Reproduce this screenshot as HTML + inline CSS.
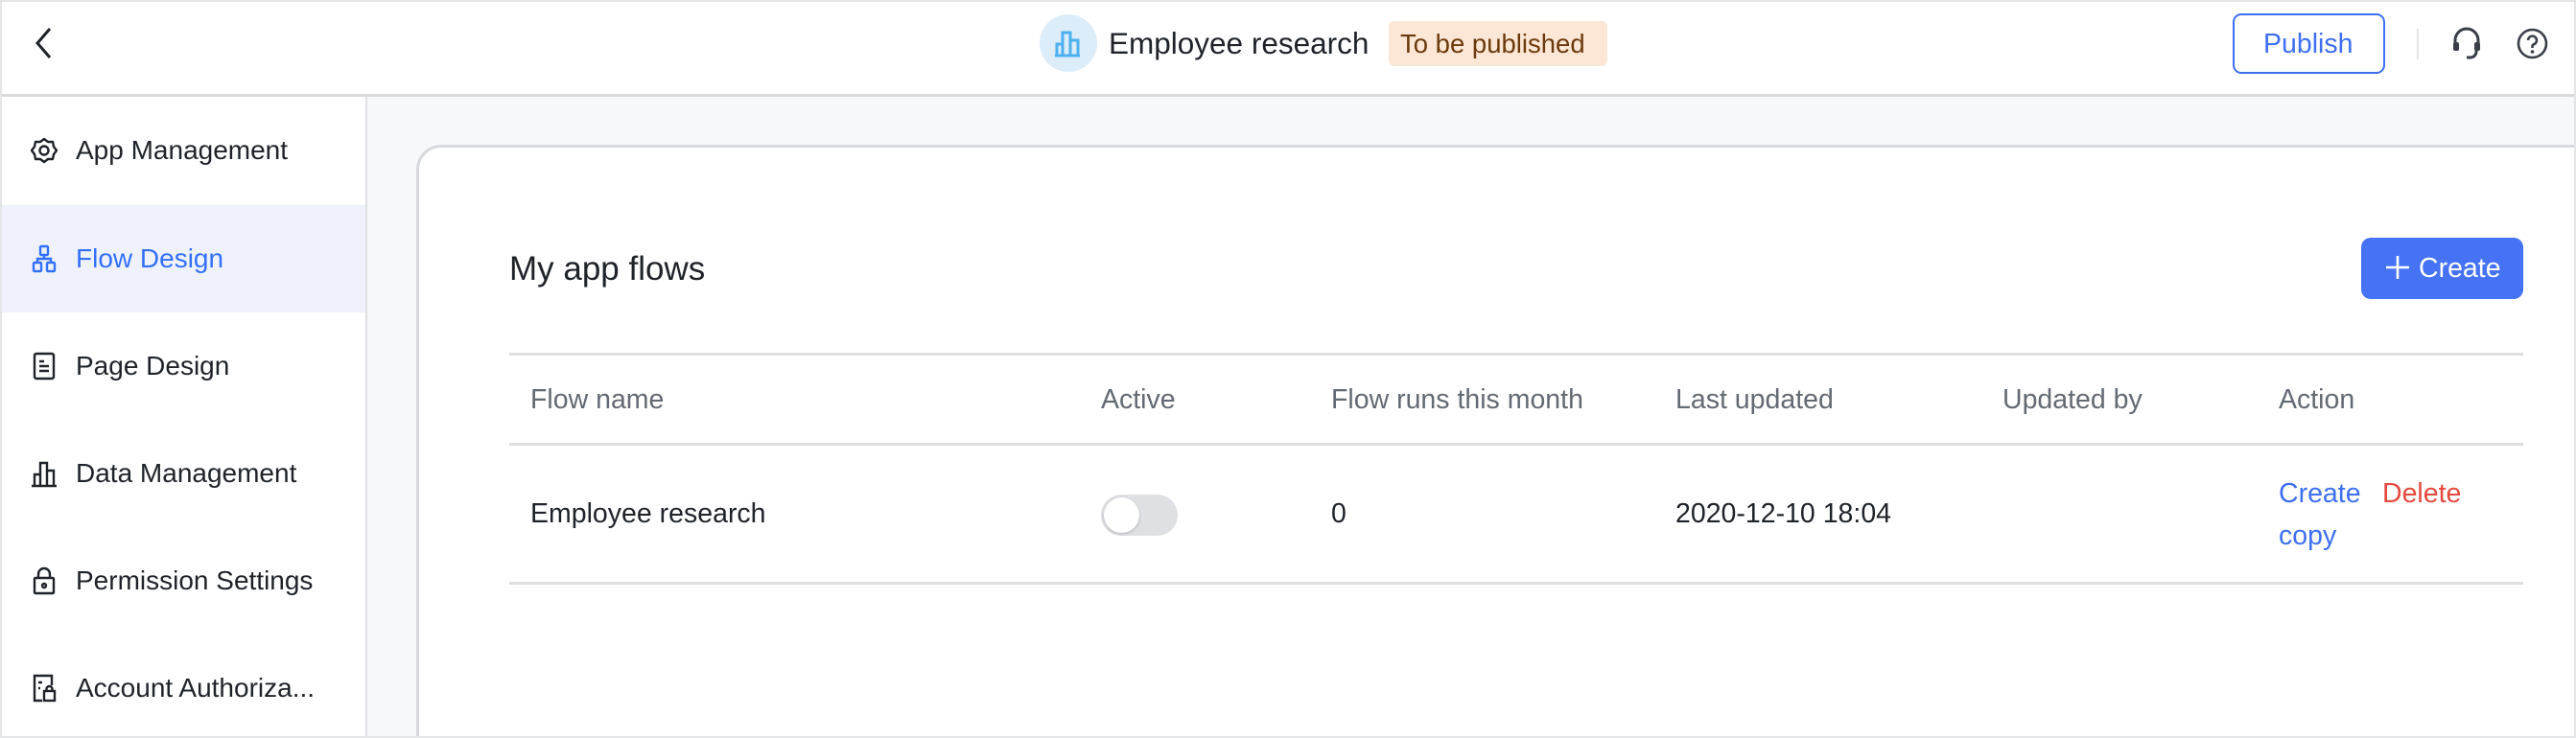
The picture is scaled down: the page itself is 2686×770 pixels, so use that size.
<!DOCTYPE html>
<html style="overflow:hidden"><head><meta charset="utf-8"><style>
*{box-sizing:border-box;margin:0;padding:0}
html,body{width:2686px;height:770px;overflow:hidden}
body{font-family:"Liberation Sans",sans-serif;background:#fff;position:relative;color:#1f2329}
.frame{position:absolute;inset:0;border:2px solid #e4e5e7}
.hdr{position:absolute;left:0;top:0;width:2686px;height:101px;border-bottom:3px solid #dadbdd;background:#fff}
.side{position:absolute;left:0;top:101px;width:383px;height:669px;border-right:2px solid #dee0e3;background:#fff}
.item{position:absolute;left:2px;width:379px;height:112px;display:flex;align-items:center;font-size:28px;color:#1f2329}
.item svg{position:absolute;left:30px}
.item span{position:absolute;left:77px}
.item.act{background:#eff2fd;color:#3370ff}
.main{position:absolute;left:383px;top:101px;right:0;bottom:0;background:#f7f8fa}
.card{position:absolute;left:434px;top:151px;width:2252px;height:619px;background:#fff;border:3px solid #d8d9dc;border-right:none;border-bottom:none;border-top-left-radius:26px}
.t{position:absolute;font-size:28.5px;white-space:nowrap}
.th{color:#646a73}
.line{position:absolute;left:531px;width:2100px;height:3px;background:#dedfe1}
</style></head><body>
<div class="hdr">
<svg style="position:absolute;left:34px;top:28px" width="24" height="34" viewBox="0 0 24 34"><path d="M18 2 L5 17 L18 32" stroke="#1f2329" stroke-width="3" fill="none"/></svg>
<div style="position:absolute;left:1084px;top:15px;width:60px;height:60px;border-radius:50%;background:#dcecf8"></div>
<svg style="position:absolute;left:1098px;top:28px" width="32" height="32" viewBox="0 0 32 32"><g fill="none" stroke="#4db1f0" stroke-width="3"><path d="M4 30 V18 H10 V30 M10 30 V6 H18 V30 M18 30 V14 H26 V30"/><path d="M2 30 H28"/></g></svg>
<div class="t" style="left:1156px;top:27px;font-size:31.5px;color:#1f2329">Employee research</div>
<div style="position:absolute;left:1448px;top:22px;width:228px;height:47px;border-radius:6px;background:#fce6d5"></div>
<div class="t" style="left:1460px;top:30px;font-size:27.5px;color:#6b3a0c">To be published</div>
<div style="position:absolute;left:2328px;top:14px;width:159px;height:63px;border:2px solid #3f6ff2;border-radius:9px"></div>
<div class="t" style="left:2360px;top:30px;color:#3f6ff2">Publish</div>
<div style="position:absolute;left:2520px;top:30px;width:2px;height:32px;background:#e5e6e8"></div>
<svg style="position:absolute;left:2556px;top:28px" width="32" height="36" viewBox="0 0 32 36"><g fill="none" stroke="#3a3f47" stroke-width="3"><path d="M4 20 V14 A12 12 0 0 1 28 14 V20"/><path d="M26 22 V26 A6 6 0 0 1 20 32 H16"/></g><rect x="2" y="16" width="6" height="9" rx="2" fill="#3a3f47"/><rect x="24" y="16" width="6" height="9" rx="2" fill="#3a3f47"/></svg>
<svg style="position:absolute;left:2624px;top:29px" width="33" height="33" viewBox="0 0 33 33"><circle cx="16.5" cy="16.5" r="14.5" fill="none" stroke="#3a3f47" stroke-width="2.6"/><path d="M12 13 A4.5 4.5 0 1 1 17.5 17.5 Q16.5 18.2 16.5 20 V21" fill="none" stroke="#3a3f47" stroke-width="2.6"/><circle cx="16.5" cy="25" r="1.8" fill="#3a3f47"/></svg>
</div>
<div class="side">
<div class="item" style="top:0">
<svg width="28" height="28" viewBox="0 0 28 28"><path d="M14 2 L18 5 L23 5 L24 10 L27 14 L24 18 L23 23 L18 23 L14 26 L10 23 L5 23 L4 18 L1 14 L4 10 L5 5 L10 5 Z" fill="none" stroke="#1f2329" stroke-width="2.4" stroke-linejoin="round"/><circle cx="14" cy="14" r="4.5" fill="none" stroke="#1f2329" stroke-width="2.4"/></svg><span>App Management</span></div>
<div class="item act" style="top:113px">
<svg width="28" height="30" viewBox="0 0 28 30"><g fill="none" stroke="#3370ff" stroke-width="2.4"><rect x="10" y="2" width="8" height="9" rx="1"/><rect x="3" y="19" width="8" height="9" rx="1"/><rect x="17" y="19" width="8" height="9" rx="1"/><path d="M14 11 V15 M7 19 V15 H21 V19"/></g></svg><span>Flow Design</span></div>
<div class="item" style="top:225px">
<svg width="28" height="30" viewBox="0 0 28 30"><g fill="none" stroke="#1f2329" stroke-width="2.4"><rect x="4" y="2" width="20" height="26" rx="2"/><path d="M9 10 H14 M9 15 H19 M9 20 H19"/></g></svg><span>Page Design</span></div>
<div class="item" style="top:337px">
<svg width="28" height="30" viewBox="0 0 28 30"><g fill="none" stroke="#1f2329" stroke-width="2.4"><path d="M4 28 V16 H10 V28 M10 28 V4 H17 V28 M17 28 V12 H24 V28 M1 28 H27"/></g></svg><span>Data Management</span></div>
<div class="item" style="top:449px">
<svg width="28" height="30" viewBox="0 0 28 30"><g fill="none" stroke="#1f2329" stroke-width="2.4"><rect x="4" y="12" width="20" height="16" rx="1"/><path d="M8 12 V8 A6 6 0 0 1 20 8 V12"/><circle cx="14" cy="20" r="2"/></g></svg><span>Permission Settings</span></div>
<div class="item" style="top:561px">
<svg width="28" height="30" viewBox="0 0 28 30"><g fill="none" stroke="#1f2329" stroke-width="2.4"><path d="M12 28 H4 V2 H22 V12"/><path d="M8 9 H12 M8 15 H10"/><rect x="14" y="18" width="11" height="10"/><path d="M16.5 18 V16 A3 3 0 0 1 22.5 16 V18"/></g></svg><span>Account Authoriza...</span></div>
</div>
<div class="main"></div>
<div class="card"></div>
<div class="t" style="left:531px;top:261px;font-size:35px;color:#1f2329">My app flows</div>
<div style="position:absolute;left:2462px;top:248px;width:169px;height:64px;background:#4673f6;border-radius:10px"></div>
<svg style="position:absolute;left:2486px;top:265px" width="28" height="28" viewBox="0 0 28 28"><path d="M14 2 V26 M2 14 H26" stroke="#fff" stroke-width="2.6"/></svg>
<div class="t" style="left:2522px;top:264px;color:#fff">Create</div>
<div class="line" style="top:368px"></div>
<div class="line" style="top:462px"></div>
<div class="line" style="top:607px"></div>
<div class="t th" style="left:553px;top:401px">Flow name</div>
<div class="t th" style="left:1148px;top:401px">Active</div>
<div class="t th" style="left:1388px;top:401px">Flow runs this month</div>
<div class="t th" style="left:1747px;top:401px">Last updated</div>
<div class="t th" style="left:2088px;top:401px">Updated by</div>
<div class="t th" style="left:2376px;top:401px">Action</div>
<div class="t" style="left:553px;top:520px">Employee research</div>
<div style="position:absolute;left:1148px;top:516px;width:80px;height:43px;border-radius:22px;background:#dee0e3"></div>
<div style="position:absolute;left:1151px;top:519px;width:37px;height:37px;border-radius:50%;background:#fff;box-shadow:0 1px 3px rgba(0,0,0,.2)"></div>
<div class="t" style="left:1388px;top:520px">0</div>
<div class="t" style="left:1747px;top:520px">2020-12-10 18:04</div>
<div class="t" style="left:2376px;top:499px;color:#3f6ff2">Create</div>
<div class="t" style="left:2484px;top:499px;color:#e5483f">Delete</div>
<div class="t" style="left:2376px;top:543px;color:#3f6ff2">copy</div>
<div class="frame"></div>
</body></html>
